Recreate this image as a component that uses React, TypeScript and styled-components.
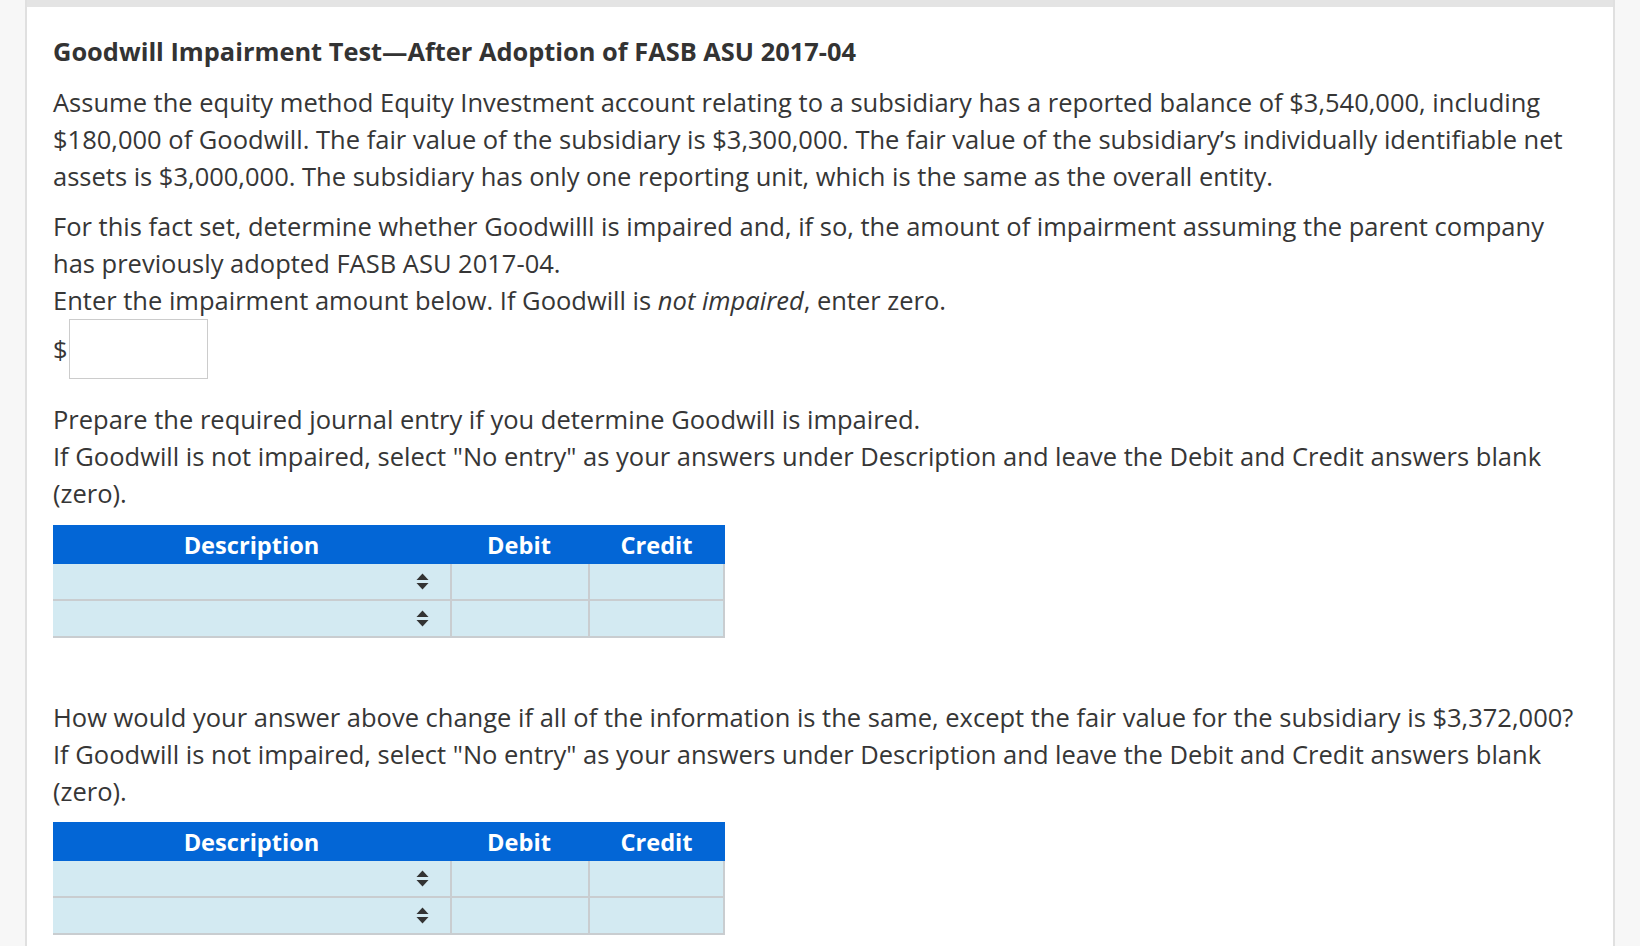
import React from "react";
import styled, { createGlobalStyle } from "styled-components";

const Global = createGlobalStyle`
  html, body { margin: 0; padding: 0; }
  body {
    background: #f7f7f7;
    font-family: "Open Sans", "Noto Sans", sans-serif;
    color: #333333;
  }
`;

const Page = styled.div`
  padding-left: 25px;
  width: 1615px;
  box-sizing: border-box;
`;

const Panel = styled.div`
  background: #ffffff;
  border-left: 2px solid #e0e0e0;
  border-right: 2px solid #e0e0e0;
  min-height: 946px;
  box-sizing: border-box;
`;

const TopBar = styled.div`
  height: 7px;
  background: #e4e4e4;
`;

const Content = styled.div`
  padding: 26px 26px 0 26px;
`;

const Title = styled.h1`
  margin: 0 0 14px 0;
  font-size: 25.4px;
  line-height: 37px;
  font-weight: 700;
  color: #333333;
`;

const Para = styled.p<{ $mb?: number; $mt?: number }>`
  margin: ${(p) => p.$mt ?? 0}px 0 ${(p) => p.$mb ?? 13}px 0;
  font-size: 25.5px;
  line-height: 37px;
  font-weight: 400;
  color: #363636;
`;

const AmountRow = styled.div`
  display: flex;
  align-items: center;
  gap: 1px;
  margin-bottom: 22px;
  font-size: 25.5px;
  color: #363636;
`;

const AmountInput = styled.div`
  width: 139px;
  height: 60px;
  box-sizing: border-box;
  border: 1px solid #cccccc;
  background: #ffffff;
`;

const Table = styled.div<{ $mt: number }>`
  margin-top: ${(p) => p.$mt}px;
  width: 672px;
  display: grid;
  grid-template-columns: 397px 138px 137px;
`;

const HeadCell = styled.div`
  background: #0366d6;
  color: #ffffff;
  font-size: 23.6px;
  font-weight: 700;
  height: 39px;
  display: flex;
  align-items: center;
  justify-content: center;
`;

const Cell = styled.div<{ $last?: boolean }>`
  background: #d3eaf2;
  height: 35px;
  border-bottom: 2px solid #c9cdd0;
  border-left: 2px solid #c9cdd0;
  border-right: ${(p) => (p.$last ? "2px solid #c9cdd0" : "none")};
`;

const SelectCell = styled(Cell)`
  display: flex;
  align-items: center;
  justify-content: flex-end;
  padding-right: 21px;
  border-left: none;
`;

const Arrows = () => (
  <svg width="13" height="17" viewBox="0 0 13 17">
    <path d="M6.5 0.5 L12.5 7 L0.5 7 Z" fill="#333" />
    <path d="M6.5 16.5 L12.5 10 L0.5 10 Z" fill="#333" />
  </svg>
);

const Journal = ({ mt }: { mt: number }) => (
  <Table $mt={mt}>
    <HeadCell>Description</HeadCell>
    <HeadCell>Debit</HeadCell>
    <HeadCell>Credit</HeadCell>
    {[0, 1].map((i) => (
      <React.Fragment key={i}>
        <SelectCell>
          <Arrows />
        </SelectCell>
        <Cell />
        <Cell $last />
      </React.Fragment>
    ))}
  </Table>
);

export default function App() {
  return (
    <>
      <Global />
      <Page>
        <Panel>
          <TopBar />
          <Content>
            <Title>Goodwill Impairment Test—After Adoption of FASB ASU 2017-04</Title>
            <Para>
              Assume the equity method Equity Investment account relating to a subsidiary has a reported balance of
              $3,540,000, including $180,000 of Goodwill. The fair value of the subsidiary is $3,300,000. The fair value
              of the subsidiary’s individually identifiable net assets is $3,000,000. The subsidiary has only one
              reporting unit, which is the same as the overall entity.
            </Para>
            <Para $mb={0}>
              For this fact set, determine whether Goodwilll is impaired and, if so, the amount of impairment assuming
              the parent company has previously adopted FASB ASU 2017-04.
              <br />
              Enter the impairment amount below. If Goodwill is <em>not impaired</em>, enter zero.
            </Para>
            <AmountRow>
              <span>$</span>
              <AmountInput />
            </AmountRow>
            <Para $mb={0}>
              Prepare the required journal entry if you determine Goodwill is impaired.
              <br />
              If Goodwill is not impaired, select "No entry" as your answers under Description and leave the Debit and
              Credit answers blank (zero).
            </Para>
            <Journal mt={13} />
            <Para $mb={0} $mt={61}>
              How would your answer above change if all of the information is the same, except the fair value for the
              subsidiary is $3,372,000?
              <br />
              If Goodwill is not impaired, select "No entry" as your answers under Description and leave the Debit and
              Credit answers blank (zero).
            </Para>
            <Journal mt={12} />
          </Content>
        </Panel>
      </Page>
    </>
  );
}
